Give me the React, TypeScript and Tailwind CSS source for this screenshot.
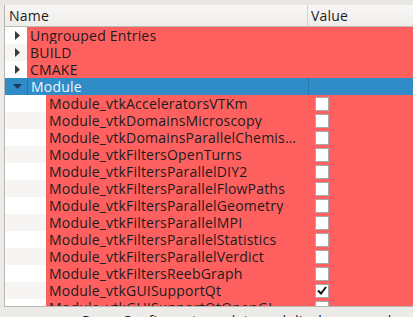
import React from 'react';

type Row = { name: string; level: 0 | 1; open?: boolean; selected?: boolean; checked?: boolean };

const ROWS: Row[] = [
  { name: 'Ungrouped Entries', level: 0 },
  { name: 'BUILD', level: 0 },
  { name: 'CMAKE', level: 0 },
  { name: 'Module', level: 0, open: true, selected: true },
  { name: 'Module_vtkAcceleratorsVTKm', level: 1 },
  { name: 'Module_vtkDomainsMicroscopy', level: 1 },
  { name: 'Module_vtkDomainsParallelChemistry', level: 1 },
  { name: 'Module_vtkFiltersOpenTurns', level: 1 },
  { name: 'Module_vtkFiltersParallelDIY2', level: 1 },
  { name: 'Module_vtkFiltersParallelFlowPaths', level: 1 },
  { name: 'Module_vtkFiltersParallelGeometry', level: 1 },
  { name: 'Module_vtkFiltersParallelMPI', level: 1 },
  { name: 'Module_vtkFiltersParallelStatistics', level: 1 },
  { name: 'Module_vtkFiltersParallelVerdict', level: 1 },
  { name: 'Module_vtkFiltersReebGraph', level: 1 },
  { name: 'Module_vtkGUISupportQt', level: 1, checked: true },
  { name: 'Module_vtkGUISupportQtOpenGL', level: 1 },
];

function Arrow({ open }: { open?: boolean }) {
  if (open) {
    return (
      <svg width="9" height="5" viewBox="0 0 9 5" className="block">
        <path d="M0 0 H9 L4.5 5 Z" fill="#173a5e" />
      </svg>
    );
  }
  return (
    <svg width="5" height="9" viewBox="0 0 5 9" className="block">
      <path d="M0 0 V9 L5 4.5 Z" fill="#3a3a3a" />
    </svg>
  );
}

function Check({ checked }: { checked?: boolean }) {
  return (
    <div className="w-[14px] h-[14px] bg-white border border-[#a9a9a9] flex items-center justify-center">
      {checked && (
        <svg width="10" height="9" viewBox="0 0 10 9">
          <path d="M1 4.5 L4 7.5 L9 1" fill="none" stroke="#111" strokeWidth="2" />
        </svg>
      )}
    </div>
  );
}

export default function App() {
  return (
    <div
      className="w-[413px] h-[317px] overflow-hidden bg-[#edebe8] text-[14px] leading-[17px] tracking-[0.2px] text-[#1c1c1c]"
      style={{ fontFamily: '"Open Sans", "DejaVu Sans", sans-serif' }}
    >
      <div className="h-[5px] bg-[#e9e7e4]" />
      <div className="ml-[4px] h-[302px] border-l border-b border-[#b9b6b1] overflow-hidden bg-white">
        {/* header */}
        <div className="flex h-[22px] border-b border-[#bdbab5] bg-gradient-to-b from-[#f8f7f5] to-[#efedea]">
          <div className="w-[303px] pl-[4px] leading-[21px] border-r border-[#d6d3ce]">Name</div>
          <div className="flex-1 pl-[3px] leading-[21px]">Value</div>
        </div>

        {ROWS.map((r, i) => {
          const alt = i % 2 === 1 ? 'bg-[#f6f5f4]' : 'bg-white';
          if (r.selected) {
            return (
              <div key={r.name} className="flex h-[17px] bg-[#308cc6] text-[#eef5fb]">
                <div className="w-[22px] flex items-center justify-center pl-[2px]">
                  <Arrow open={r.open} />
                </div>
                <div className="w-[281px] pl-[3px] border-l border-[#2877ab] whitespace-nowrap overflow-hidden">
                  {r.name}
                </div>
                <div className="flex-1 border-l border-[#2877ab]" />
              </div>
            );
          }
          return (
            <div key={r.name} className={`flex h-[17px] ${alt}`}>
              <div
                className={`${r.level === 0 ? 'w-[22px]' : 'w-[41px]'} flex items-center justify-center pl-[2px]`}
              >
                {r.level === 0 && <Arrow />}
              </div>
              <div
                className={`${r.level === 0 ? 'w-[281px]' : 'w-[262px]'} bg-[#fe6060] pl-[3px] pr-[7px] whitespace-nowrap overflow-hidden text-ellipsis`}
              >
                {r.name}
              </div>
              <div className="flex-1 bg-[#fe6060] pl-[7px] flex items-center">
                {r.level === 1 && <Check checked={r.checked} />}
              </div>
            </div>
          );
        })}
      </div>
      <div className="pl-[82px] pt-[5px] whitespace-nowrap">
        Press Configure to update and display new values in red, then press Generate.
      </div>
    </div>
  );
}
